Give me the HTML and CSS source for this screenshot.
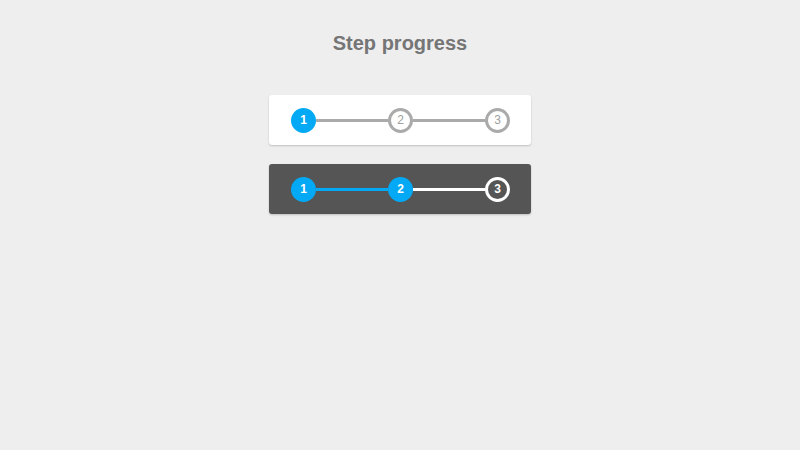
FILE: index.html
```html
<!DOCTYPE html>
<html lang="en">
<head>
  <meta charset="UTF-8" />
  <title>Step progress</title>
  <link rel="stylesheet" href="styles.css">
</head>
<body>

  <h1>Step progress</h1>

  <!-- light variant -->
  <div class="card">
    <div class="steps">
      <span class="step done">1</span>
      <span class="line"></span>
      <span class="step">2</span>
      <span class="line"></span>
      <span class="step">3</span>
    </div>
  </div>

  <!-- dark variant -->
  <div class="card dark">
    <div class="steps">
      <span class="step done">1</span>
      <span class="line done"></span>
      <span class="step done">2</span>
      <span class="line"></span>
      <span class="step">3</span>
    </div>
  </div>

</body>
</html>
```

FILE: styles.css
```css
body {
  font-family: 'Liberation Sans', Arial, sans-serif;
  background-color: #eeeeee;
  margin: 0;
  padding-top: 31px;
}
h1 {
  text-align: center;
  font-size: 20px;
  line-height: 24px;
  color: #757575;
  margin: 0 0 40px 0;
}
.card {
  width: 262px;
  height: 50px;
  margin: 0 auto 19px auto;
  background-color: #ffffff;
  border-radius: 3px;
  box-shadow: 0 1px 2px rgba(0, 0, 0, 0.2);
  padding: 0 21px 0 22px;
  box-sizing: border-box;
  display: flex;
  align-items: center;
}
.card.dark {
  background-color: #555555;
}
.steps {
  display: flex;
  align-items: center;
  width: 100%;
}
.step {
  width: 25px;
  height: 25px;
  box-sizing: border-box;
  border-radius: 50%;
  border: 3px solid #aaaaaa;
  background-color: #ffffff;
  color: #9e9e9e;
  font-size: 12px;
  display: flex;
  align-items: center;
  justify-content: center;
  flex: none;
}
.line {
  flex: 1;
  height: 3px;
  background-color: #aaaaaa;
}
.step.done {
  border-color: #03a9f4;
  background-color: #03a9f4;
  color: #ffffff;
  font-weight: bold;
}
.dark .step {
  border-color: #ffffff;
  background-color: #555555;
  color: #ffffff;
  font-weight: bold;
}
.dark .step.done {
  border-color: #03a9f4;
  background-color: #03a9f4;
}
.dark .line {
  background-color: #ffffff;
}
.dark .line.done {
  background-color: #03a9f4;
}
```
